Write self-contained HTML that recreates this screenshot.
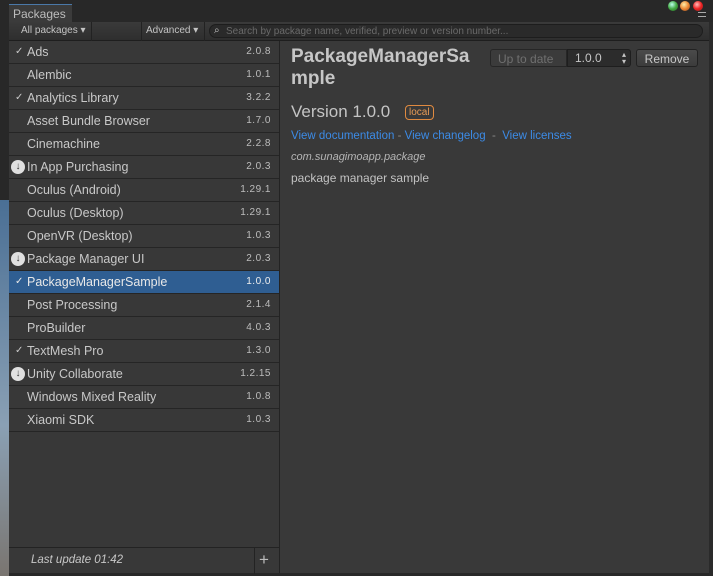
<!DOCTYPE html>
<html><head><style>
*{margin:0;padding:0;box-sizing:border-box}
body{width:713px;height:576px;overflow:hidden;background:#282828;font-family:"Liberation Sans",sans-serif;position:relative}
.lm{position:absolute;left:0;top:200px;width:9px;height:376px;background:linear-gradient(#4a6f95,#8aa0b4 60%,#7a7570)}
.win{position:absolute;left:9px;top:22px;width:700px;height:551px;background:#393939}
.tab{position:absolute;left:9px;top:4px;width:63px;height:18px;background:#3b3b3b;border-top:1px solid #4a78a8;color:#bdbdbd;font-size:12px;padding:2px 0 0 4px}
.tb{position:absolute;left:0;top:0;width:700px;height:19px;background:linear-gradient(#3a3a3a,#2e2e2e);border-bottom:1px solid #1e1e1e}
.tb span{position:absolute;top:3px;font-size:10px;color:#c4c4c4;white-space:nowrap}
.search{position:absolute;left:200px;top:2px;width:494px;height:14px;border-radius:7px;background:#2a2a2a;border:1px solid #1d1d1d;color:#6a6a6a;font-size:10px;padding:1px 0 0 16px;white-space:nowrap;overflow:hidden}
.list{position:absolute;left:0;top:19px;width:271px;height:532px;background:#383838;border-right:1px solid #232323}
.row{height:23px;border-bottom:1px solid #252525;position:relative;color:#c8c8c8;font-size:12.5px;white-space:nowrap}
.row .n{position:absolute;left:18px;top:4px}
.row .v{position:absolute;right:8px;top:5px;font-size:10px;color:#bdbdbd;letter-spacing:.5px}
.row .c{position:absolute;left:6px;top:5px;font-size:10px}
.row .d{position:absolute;left:2px;top:4px;width:14px;height:14px;border-radius:7px;background:#e0e0e0;color:#383838;font-size:10px;text-align:center;line-height:14px;font-weight:bold}
.sel{background:#2f5e92;color:#e8e8e8}
.foot{position:absolute;left:0;bottom:0;width:271px;height:26px;border-top:1px solid #232323;color:#c8c8c8;font-size:11.5px;font-style:italic;white-space:nowrap}
.det{position:absolute;left:282px;top:19px;width:418px;color:#c8c8c8}
.det div{white-space:nowrap}
</style></head><body>
<div class="lm"></div>
<div class="tab">Packages</div>
<div style="position:absolute;left:668px;top:1px;width:10px;height:10px;border-radius:5px;background:radial-gradient(circle at 40% 35%,#bfe,#4a4 50%,#262)"></div>
<div style="position:absolute;left:680px;top:1px;width:10px;height:10px;border-radius:5px;background:radial-gradient(circle at 40% 35%,#fea,#e83 50%,#842)"></div>
<div style="position:absolute;left:693px;top:1px;width:10px;height:10px;border-radius:5px;background:radial-gradient(circle at 40% 35%,#fbb,#e22 50%,#822)"></div>
<div style="position:absolute;left:698px;top:12px;width:8px;height:5px;border-top:1px solid #aaa;border-bottom:1px solid #aaa"></div>
<div class="win">
<div class="tb">
<span style="left:12px">All packages ▾</span>
<div style="position:absolute;left:82px;top:0;width:1px;height:19px;background:#222"></div>
<div style="position:absolute;left:132px;top:0;width:1px;height:19px;background:#222"></div>
<span style="left:137px">Advanced ▾</span>
<div style="position:absolute;left:195px;top:0;width:1px;height:19px;background:#222"></div>
<div class="search"><span style="position:absolute;left:4px;top:0;font-size:10px">⌕</span>Search by package name, verified, preview or version number...</div>
</div>
<div class="list">
<div class="row"><span class="c">✓</span><span class="n">Ads</span><span class="v">2.0.8</span></div>
<div class="row"><span class="n">Alembic</span><span class="v">1.0.1</span></div>
<div class="row"><span class="c">✓</span><span class="n">Analytics Library</span><span class="v">3.2.2</span></div>
<div class="row"><span class="n">Asset Bundle Browser</span><span class="v">1.7.0</span></div>
<div class="row"><span class="n">Cinemachine</span><span class="v">2.2.8</span></div>
<div class="row"><span class="d">↓</span><span class="n">In App Purchasing</span><span class="v">2.0.3</span></div>
<div class="row"><span class="n">Oculus (Android)</span><span class="v">1.29.1</span></div>
<div class="row"><span class="n">Oculus (Desktop)</span><span class="v">1.29.1</span></div>
<div class="row"><span class="n">OpenVR (Desktop)</span><span class="v">1.0.3</span></div>
<div class="row"><span class="d">↓</span><span class="n">Package Manager UI</span><span class="v">2.0.3</span></div>
<div class="row sel"><span class="c">✓</span><span class="n">PackageManagerSample</span><span class="v" style="color:#eee">1.0.0</span></div>
<div class="row"><span class="n">Post Processing</span><span class="v">2.1.4</span></div>
<div class="row"><span class="n">ProBuilder</span><span class="v">4.0.3</span></div>
<div class="row"><span class="c">✓</span><span class="n">TextMesh Pro</span><span class="v">1.3.0</span></div>
<div class="row"><span class="d">↓</span><span class="n">Unity Collaborate</span><span class="v">1.2.15</span></div>
<div class="row"><span class="n">Windows Mixed Reality</span><span class="v">1.0.8</span></div>
<div class="row"><span class="n">Xiaomi SDK</span><span class="v">1.0.3</span></div>
<div class="foot"><span style="position:absolute;left:22px;top:6px">Last update 01:42</span>
<div style="position:absolute;left:245px;top:0;width:1px;height:26px;background:#232323"></div>
<span style="position:absolute;left:250px;top:2px;font-size:17px;font-style:normal;color:#bbb">+</span></div>
</div>
<div class="det">
<div style="position:absolute;left:0;top:5px;font-size:19px;font-weight:bold;line-height:22px;color:#c6c6c6">PackageManagerSa<br>mple</div>
<div style="position:absolute;left:199px;top:8px;width:77px;height:18px;border:1px solid #262626;border-radius:3px 0 0 3px;background:#3b3b3b;color:#707070;font-size:12px;padding:2px 0 0 7px">Up to date</div>
<div style="position:absolute;left:276px;top:8px;width:64px;height:18px;border:1px solid #1e1e1e;border-radius:0 3px 3px 0;background:#2c2c2c;color:#c6c6c6;font-size:12px;padding:1px 0 0 7px">1.0.0<span style="position:absolute;right:4px;top:1px;font-size:8px;line-height:7px">▴<br>▾</span></div>
<div style="position:absolute;left:345px;top:8px;width:62px;height:18px;border:1px solid #222;border-radius:3px;background:linear-gradient(#4a4a4a,#3c3c3c);color:#c8c8c8;font-size:12px;text-align:center;padding-top:2px">Remove</div>
<div style="position:absolute;left:0;top:61px;font-size:17px;color:#c4c4c4">Version 1.0.0</div>
<div style="position:absolute;left:114px;top:64px;border:1px solid #e08a40;border-radius:4px;color:#e69a55;font-size:10px;padding:1px 3px">local</div>
<div style="position:absolute;left:0;top:89px;font-size:11.5px;color:#3c8be6">View documentation <span style="color:#888">-</span> View changelog &nbsp;<span style="color:#888">-</span>&nbsp; View licenses</div>
<div style="position:absolute;left:0;top:110px;font-size:11px;font-style:italic;color:#b5b5b5">com.sunagimoapp.package</div>
<div style="position:absolute;left:0;top:130px;font-size:12px;color:#c2c2c2">package manager sample</div>
</div>
</div>
<div style="position:absolute;left:709px;top:22px;width:4px;height:554px;background:#2a2a2a"></div>
</body></html>
